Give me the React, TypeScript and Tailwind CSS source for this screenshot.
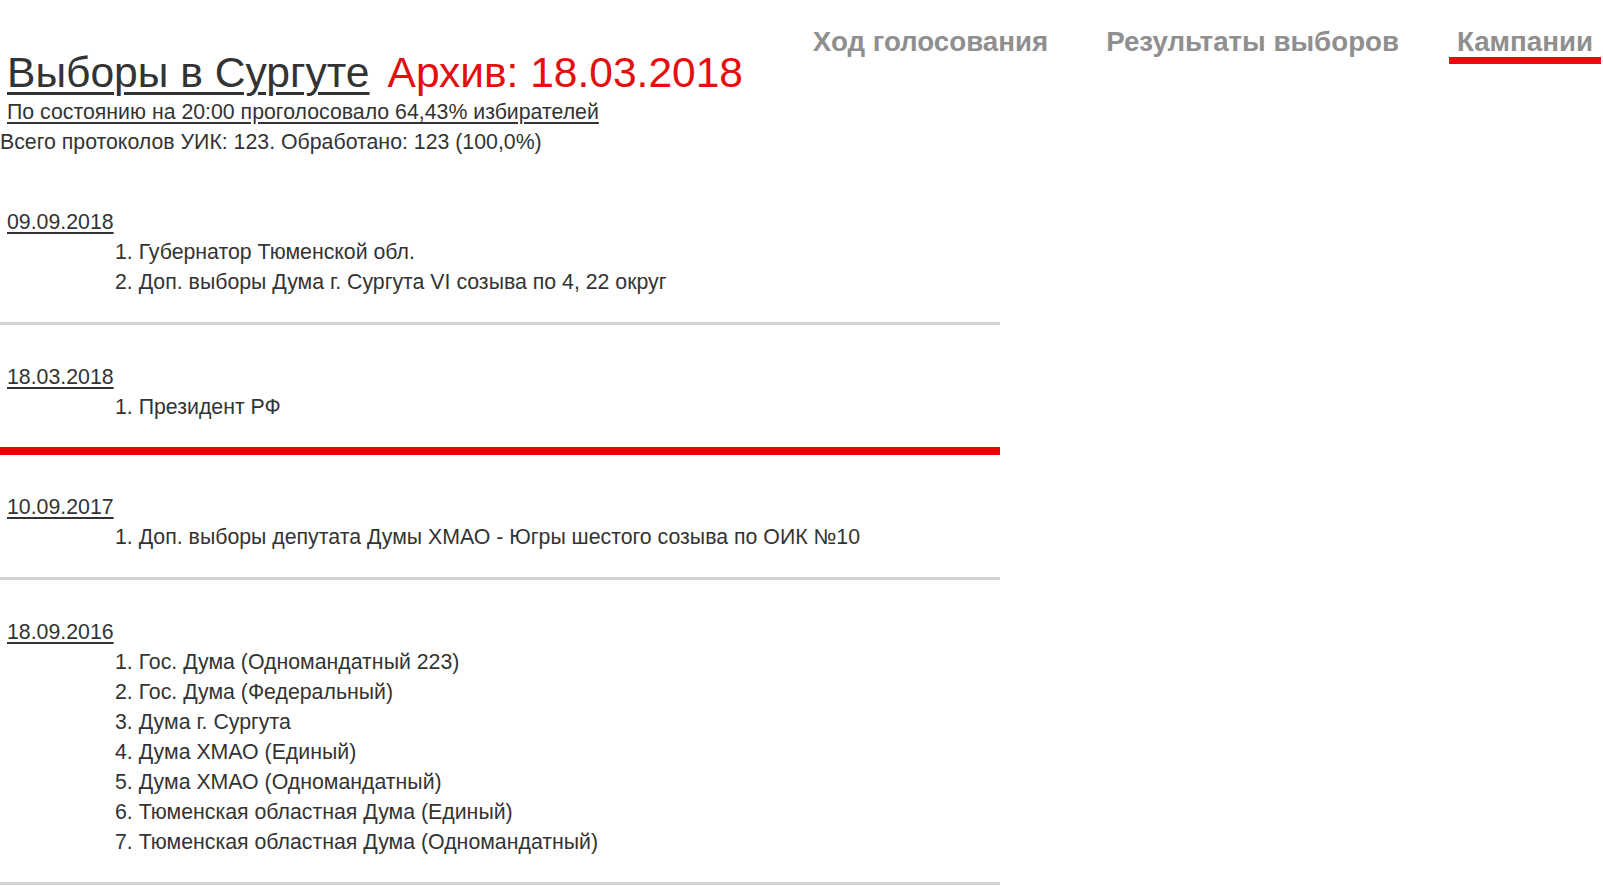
import React from "react";

type Section = { date: string; items: string[]; red?: boolean };

const sections: Section[] = [
  {
    date: "09.09.2018",
    items: ["Губернатор Тюменской обл.", "Доп. выборы Дума г. Сургута VI созыва по 4, 22 округ"],
  },
  { date: "18.03.2018", items: ["Президент РФ"], red: true },
  {
    date: "10.09.2017",
    items: ["Доп. выборы депутата Думы ХМАО - Югры шестого созыва по ОИК №10"],
  },
  {
    date: "18.09.2016",
    items: [
      "Гос. Дума (Одномандатный 223)",
      "Гос. Дума (Федеральный)",
      "Дума г. Сургута",
      "Дума ХМАО (Единый)",
      "Дума ХМАО (Одномандатный)",
      "Тюменская областная Дума (Единый)",
      "Тюменская областная Дума (Одномандатный)",
    ],
  },
];

export default function App() {
  return (
    <div className="w-[1603px] min-h-screen bg-white text-[#333333] font-['Liberation_Sans',Arial,sans-serif]">
      <header className="flex items-start justify-between">
        <div className="pt-[48px]">
          <h1 className="pl-[7px] text-[42.6px] leading-[48px] font-normal whitespace-nowrap">
            <a href="#" className="underline decoration-[3px] underline-offset-[5px] text-[#333333]">
              Выборы в Сургуте
            </a>
            <span className="ml-[18px] text-[42.5px] text-[#e50d0d]">Архив: 18.03.2018</span>
          </h1>
          <a href="#" className="block pl-[7px] text-[21.3px] leading-[30px] underline underline-offset-[3px]">
            По состоянию на 20:00 проголосовало 64,43% избирателей
          </a>
          <div className="text-[21.3px] leading-[30px]">Всего протоколов УИК: 123. Обработано: 123 (100,0%)</div>
        </div>
        <nav className="flex gap-[42px] pt-[27px] pr-[2px] text-[27.7px] leading-[30px] font-bold text-[#8f8f8f]">
          <a href="#" className="px-2 border-b-[7px] border-transparent">
            Ход голосования
          </a>
          <a href="#" className="px-2 border-b-[7px] border-transparent">
            Результаты выборов
          </a>
          <a href="#" className="px-2 border-b-[7px] border-[#e50d0d]">
            Кампании
          </a>
        </nav>
      </header>
      <main className="mt-[13px] w-[1000px]">
        {sections.map((s) => (
          <section
            key={s.date}
            className={
              s.red
                ? "pt-[37px] pb-[25px] border-b-[8px] border-[#f20000]"
                : "pt-[37px] pb-[25px] border-b-[3px] border-[#d4d4d4]"
            }
          >
            <a href="#" className="block pl-[7px] text-[21.3px] leading-[30px] underline underline-offset-[3px]">
              <span>{s.date}</span>
            </a>
            <ol className="pl-[115px] text-[21.3px] leading-[30px]">
              {s.items.map((it, i) => (
                <li key={it}>
                  {i + 1}. {it}
                </li>
              ))}
            </ol>
          </section>
        ))}
      </main>
    </div>
  );
}
